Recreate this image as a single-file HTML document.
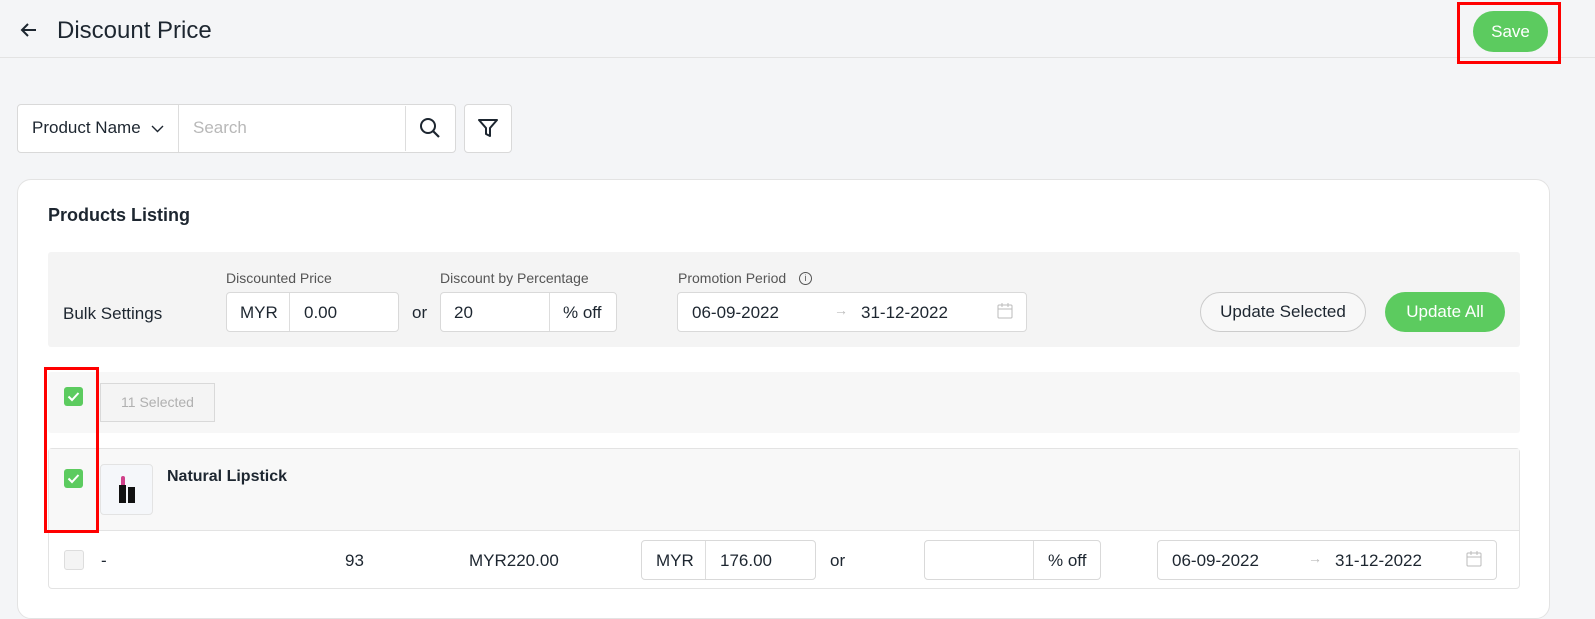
<!DOCTYPE html>
<html><head><meta charset="utf-8"><style>
*{box-sizing:border-box;margin:0;padding:0}
body{width:1595px;height:610px;overflow:hidden;background:#f4f5f7;font-family:"Liberation Sans",Arial,sans-serif;color:#1d2630;position:relative}
.a{position:absolute}
.box{position:absolute;background:#fff;border:1px solid #d9d9d9;border-radius:4px}
.t{position:absolute;white-space:nowrap}
.cb{position:absolute;width:19px;height:19px;border-radius:3px;background:#5ccb5f}
.cb svg{position:absolute;left:3px;top:4px}
</style></head><body>
<!-- header -->
<svg class="a" style="left:19px;top:20px" width="20" height="20" viewBox="0 0 20 20"><path d="M17 10H3M9 4L3 10l6 6" stroke="#1d2630" stroke-width="2" fill="none"/></svg>
<div class="t" style="left:57px;top:17px;font-size:24px">Discount Price</div>
<div class="a" style="left:0;top:57px;width:1595px;height:1px;background:#e3e3e3"></div>
<div class="a" style="left:1457px;top:2px;width:104px;height:62px;border:3px solid #f00"></div>
<div class="a" style="left:1473px;top:11px;width:75px;height:41px;border-radius:21px;background:#5ccb5f;color:#fff;font-size:17px;text-align:center;line-height:41px">Save</div>
<!-- search -->
<div class="box" style="left:17px;top:104px;width:439px;height:49px"></div>
<div class="a" style="left:178px;top:105px;width:1px;height:47px;background:#ddd"></div>
<div class="a" style="left:405px;top:106px;width:1px;height:45px;background:#ddd"></div>
<div class="t" style="left:32px;top:118px;font-size:17px">Product Name</div>
<svg class="a" style="left:151px;top:125px" width="13" height="8"><path d="M1 1l5.5 5.5L12 1" stroke="#1d2630" stroke-width="1.4" fill="none"/></svg>
<div class="t" style="left:193px;top:118px;font-size:17px;color:#b8b8b8">Search</div>
<svg class="a" style="left:418px;top:116px" width="24" height="24" viewBox="0 0 24 24"><circle cx="10" cy="10" r="7" stroke="#1d2630" stroke-width="2" fill="none"/><path d="M15 15l6 6" stroke="#1d2630" stroke-width="2.2"/></svg>
<div class="box" style="left:464px;top:104px;width:48px;height:49px"></div>
<svg class="a" style="left:477px;top:117px" width="22" height="22" viewBox="0 0 22 22"><path d="M2 3h18l-7 8v8l-4-2v-6z" stroke="#1d2630" stroke-width="2" fill="none" stroke-linejoin="round"/></svg>
<!-- card -->
<div class="a" style="left:17px;top:179px;width:1533px;height:440px;background:#fff;border:1px solid #e3e3e3;border-radius:14px"></div>
<div class="t" style="left:48px;top:205px;font-size:18px;font-weight:bold">Products Listing</div>
<div class="a" style="left:48px;top:252px;width:1472px;height:95px;background:#f4f4f4;border-radius:3px"></div>
<div class="t" style="left:63px;top:304px;font-size:17px">Bulk Settings</div>
<div class="t" style="left:226px;top:270px;font-size:14px;color:#555">Discounted Price</div>
<div class="box" style="left:226px;top:292px;width:173px;height:40px"></div>
<div class="a" style="left:289px;top:293px;width:1px;height:38px;background:#ddd"></div>
<div class="t" style="left:240px;top:303px;font-size:17px">MYR</div>
<div class="t" style="left:304px;top:303px;font-size:17px">0.00</div>
<div class="t" style="left:412px;top:303px;font-size:17px">or</div>
<div class="t" style="left:440px;top:270px;font-size:14px;color:#555">Discount by Percentage</div>
<div class="box" style="left:440px;top:292px;width:177px;height:40px"></div>
<div class="a" style="left:549px;top:293px;width:1px;height:38px;background:#ddd"></div>
<div class="t" style="left:454px;top:303px;font-size:17px">20</div>
<div class="t" style="left:563px;top:303px;font-size:17px">% off</div>
<div class="t" style="left:678px;top:270px;font-size:14px;color:#555">Promotion Period</div>
<div class="a" style="left:799px;top:272px;width:13px;height:13px;border:1px solid #555;border-radius:50%;font-size:9px;text-align:center;line-height:11px;color:#555">i</div>
<div class="box" style="left:677px;top:292px;width:350px;height:40px"></div>
<div class="t" style="left:692px;top:303px;font-size:17px">06-09-2022</div>
<div class="t" style="left:834px;top:302px;font-size:14px;color:#bbb">→</div>
<div class="t" style="left:861px;top:303px;font-size:17px">31-12-2022</div>
<svg class="a" style="left:997px;top:302px" width="16" height="17"><rect x="1" y="3" width="14" height="13" rx="1" stroke="#bbb" fill="none"/><path d="M1 7h14M5 1v4M11 1v4" stroke="#bbb"/></svg>
<div class="a" style="left:1200px;top:292px;width:166px;height:40px;border:1px solid #ccc;border-radius:20px;font-size:17px;text-align:center;line-height:38px;background:#f8f8f8">Update Selected</div>
<div class="a" style="left:1385px;top:292px;width:120px;height:40px;border-radius:20px;background:#5ccb5f;color:#fff;font-size:17px;text-align:center;line-height:40px">Update All</div>
<!-- selected row -->
<div class="a" style="left:48px;top:372px;width:1472px;height:61px;background:#f7f7f7;border-radius:3px"></div>
<div class="cb" style="left:64px;top:387px"><svg width="13" height="11"><path d="M1.5 5.5l3.5 3.5 6.5-7" stroke="#fff" stroke-width="2" fill="none"/></svg></div>
<div class="a" style="left:100px;top:383px;width:115px;height:39px;border:1px solid #d9d9d9;background:#f4f4f4;color:#b0b0b0;font-size:14px;text-align:center;line-height:37px">11 Selected</div>
<!-- product -->
<div class="a" style="left:48px;top:448px;width:1472px;height:141px;border:1px solid #e3e3e3;border-radius:4px;background:#fff"></div>
<div class="a" style="left:49px;top:449px;width:1470px;height:82px;background:#f8f8f8;border-bottom:1px solid #e3e3e3"></div>
<div class="cb" style="left:64px;top:469px"><svg width="13" height="11"><path d="M1.5 5.5l3.5 3.5 6.5-7" stroke="#fff" stroke-width="2" fill="none"/></svg></div>
<div class="a" style="left:100px;top:464px;width:53px;height:51px;border:1px solid #e3e3e3;border-radius:4px;background:#f5f7fa"></div>
<div class="a" style="left:121px;top:476px;width:4px;height:9px;background:#d0408a;border-radius:2px 2px 0 0"></div>
<div class="a" style="left:119px;top:485px;width:7px;height:18px;background:#111"></div>
<div class="a" style="left:128px;top:487px;width:7px;height:16px;background:#111"></div>
<div class="t" style="left:167px;top:468px;font-size:16px;font-weight:bold">Natural Lipstick</div>
<div class="a" style="left:64px;top:550px;width:20px;height:20px;border:1px solid #ddd;border-radius:3px;background:#f4f4f4"></div>
<div class="t" style="left:101px;top:551px;font-size:17px">-</div>
<div class="t" style="left:345px;top:551px;font-size:17px">93</div>
<div class="t" style="left:469px;top:551px;font-size:17px">MYR220.00</div>
<div class="box" style="left:641px;top:540px;width:175px;height:40px"></div>
<div class="a" style="left:705px;top:541px;width:1px;height:38px;background:#ddd"></div>
<div class="t" style="left:656px;top:551px;font-size:17px">MYR</div>
<div class="t" style="left:720px;top:551px;font-size:17px">176.00</div>
<div class="t" style="left:830px;top:551px;font-size:17px">or</div>
<div class="box" style="left:924px;top:540px;width:177px;height:40px"></div>
<div class="a" style="left:1033px;top:541px;width:1px;height:38px;background:#ddd"></div>
<div class="t" style="left:1048px;top:551px;font-size:17px">% off</div>
<div class="box" style="left:1157px;top:540px;width:340px;height:40px"></div>
<div class="t" style="left:1172px;top:551px;font-size:17px">06-09-2022</div>
<div class="t" style="left:1308px;top:550px;font-size:14px;color:#bbb">→</div>
<div class="t" style="left:1335px;top:551px;font-size:17px">31-12-2022</div>
<svg class="a" style="left:1466px;top:550px" width="16" height="17"><rect x="1" y="3" width="14" height="13" rx="1" stroke="#bbb" fill="none"/><path d="M1 7h14M5 1v4M11 1v4" stroke="#bbb"/></svg>
<!-- red box left -->
<div class="a" style="left:44px;top:367px;width:55px;height:166px;border:3px solid #f00"></div>
</body></html>
